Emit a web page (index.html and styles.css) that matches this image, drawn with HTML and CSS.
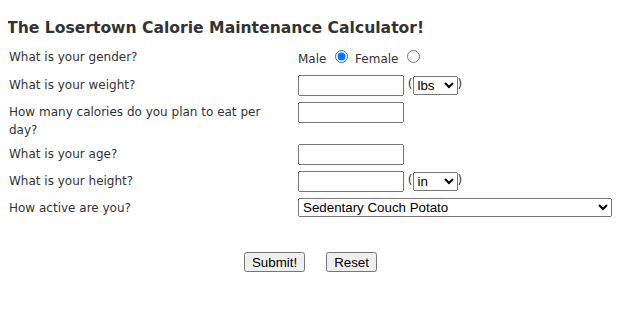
FILE: index.html
```html
<!DOCTYPE html>
<html>
<head>
<meta charset="utf-8">
<link rel="stylesheet" href="styles.css">
</head>
<body>
<h1 class="title">The Losertown Calorie Maintenance Calculator!</h1>
<form class="calc">
<table class="grid">
<tr class="first">
<td class="label">What is your gender?</td>
<td class="field">Male <input type="radio" name="g" checked> Female <input type="radio" name="g"></td>
</tr>
<tr>
<td class="label">What is your weight?</td>
<td class="field"><input type="text" class="num"> (<select class="unit"><option>lbs</option><option>kg</option></select>)</td>
</tr>
<tr class="tall">
<td class="label">How many calories do you plan to eat per day?</td>
<td class="field"><input type="text" class="num"></td>
</tr>
<tr>
<td class="label">What is your age?</td>
<td class="field"><input type="text" class="num"></td>
</tr>
<tr>
<td class="label">What is your height?</td>
<td class="field"><input type="text" class="num"> (<select class="unit"><option>in</option><option>cm</option></select>)</td>
</tr>
<tr>
<td class="label">How active are you?</td>
<td class="field"><select class="activity"><option>Sedentary Couch Potato</option><option>Lightly Active</option></select></td>
</tr>
</table>
<div class="buttons">
<input type="submit" class="btn" value="Submit!">
<input type="reset" class="btn" value="Reset">
</div>
</form>
</body>
</html>
```
FILE: styles.css
```css
body {
  margin: 8px;
  font-family: "DejaVu Sans", Verdana, sans-serif;
  color: #333;
}
.title {
  font-size: 15.6px;
  font-weight: bold;
  margin: 10px 0 6px -1px;
  line-height: 20px;
}
.grid {
  width: 100%;
  border-collapse: collapse;
}
.grid td {
  vertical-align: top;
  padding: 3px 1px 3px 1px;
}
.first td {
  padding-bottom: 4px;
}
.grid .tall td {
  padding-bottom: 2px;
}
.grid td.label {
  width: 278px;
  padding-right: 10px;
  font-size: 12px;
  line-height: 18px;
  padding-top: 4px;
}
.field {
  font-size: 12px;
  line-height: 18px;
}
.num {
  width: 106px;
  height: 21px;
  box-sizing: border-box;
  margin: 0;
  vertical-align: top;
}
.unit {
  width: 45px;
  height: 19px;
  vertical-align: top;
  margin: 1px 0 0;
}
.activity {
  width: 100%;
  height: 19px;
  margin: 0;
}
.buttons {
  display: flex;
  justify-content: center;
  gap: 21px;
  margin-top: 32px;
}
.btn {
  height: 20px;
  margin: 0;
}
```
